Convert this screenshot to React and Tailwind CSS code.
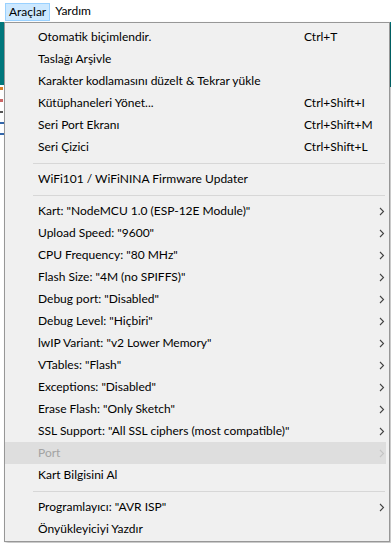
import { Fragment } from 'react';

const Chevron = ({ muted }) => (
  <svg width="6" height="9" viewBox="0 0 6 9" className="block">
    <path d="M1 1 L4.5 4.5 L1 8" fill="none" stroke={muted ? '#c4c4c4' : '#444'} strokeWidth="1.1" />
  </svg>
);

const sections = [
  [
    { label: 'Otomatik biçimlendir.', shortcut: 'Ctrl+T' },
    { label: 'Taslağı Arşivle' },
    { label: 'Karakter kodlamasını düzelt & Tekrar yükle' },
    { label: 'Kütüphaneleri Yönet...', shortcut: 'Ctrl+Shift+I' },
    { label: 'Seri Port Ekranı', shortcut: 'Ctrl+Shift+M' },
    { label: 'Seri Çizici', shortcut: 'Ctrl+Shift+L' },
  ],
  [{ label: 'WiFi101 / WiFiNINA Firmware Updater' }],
  [
    { label: 'Kart: "NodeMCU 1.0 (ESP-12E Module)"', sub: true },
    { label: 'Upload Speed: "9600"', sub: true },
    { label: 'CPU Frequency: "80 MHz"', sub: true },
    { label: 'Flash Size: "4M (no SPIFFS)"', sub: true },
    { label: 'Debug port: "Disabled"', sub: true },
    { label: 'Debug Level: "Hiçbiri"', sub: true },
    { label: 'lwIP Variant: "v2 Lower Memory"', sub: true },
    { label: 'VTables: "Flash"', sub: true },
    { label: 'Exceptions: "Disabled"', sub: true },
    { label: 'Erase Flash: "Only Sketch"', sub: true },
    { label: 'SSL Support: "All SSL ciphers (most compatible)"', sub: true },
    { label: 'Port', sub: true, disabled: true },
    { label: 'Kart Bilgisini Al' },
  ],
  [
    { label: 'Programlayıcı: "AVR ISP"', sub: true },
    { label: 'Önyükleyiciyi Yazdır' },
  ],
];

function MenuItem({ item }) {
  return (
    <div
      className={`flex items-center h-[22px] mr-[3px] ${item.disabled ? 'bg-[#dedede] text-[#a3a3a3]' : 'text-black'}`}
    >
      <span className="pl-[33px] flex-1 whitespace-nowrap">{item.label}</span>
      {item.shortcut && <span className="w-[75px] whitespace-nowrap">{item.shortcut}</span>}
      <span className="w-[7px] flex justify-start">{item.sub && <Chevron muted={item.disabled} />}</span>
    </div>
  );
}

export default function App() {
  return (
    <div className="relative w-[391px] h-[543px] overflow-hidden bg-white text-[12px] font-['Lato',sans-serif]">
      {/* menu bar */}
      <div className="flex items-center h-[22px] bg-white pl-[5px] gap-[1px]">
        <div className="h-[18px] mt-[2px] px-[3px] flex items-center bg-[#cce8ff] border border-[#99d1ff]">Araçlar</div>
        <div className="px-[4px]">Yardım</div>
      </div>

      {/* app behind the menu */}
      <div className="flex h-[521px]">
        <div className="w-[4px] flex flex-col">
          <div className="h-[63px] bg-[#00777c]" />
          <div className="flex-1 bg-white flex flex-col gap-[9px] pt-[2px]">
            <div className="h-[3px] w-[3px] bg-[#d9822b]" />
            <div className="h-[3px] w-[3px] bg-[#cc6666]" />
            <div className="h-[2px] w-[3px] bg-[#555]" />
            <div className="h-[2px] w-[4px] bg-[#3366aa]" />
            <div className="h-[2px] w-[4px] bg-[#3366aa]" />
          </div>
        </div>
        <div className="flex-1" />
        <div className="w-[2px] flex flex-col">
          <div className="h-[65px] bg-[#00777c]" />
        </div>
      </div>

      {/* dropdown */}
      <div className="absolute left-[4px] top-[22px] w-[386px] h-[520px] bg-[#f0f0f0] border border-[#979797] shadow-[2px_2px_3px_rgba(0,0,0,0.25)] pt-[3px]">
        {sections.map((sec, i) => (
          <Fragment key={i}>
            {i > 0 && <div className="h-[10px] flex items-center pl-[28px] pr-[4px]"><div className="h-px w-full bg-[#d7d7d7]" /></div>}
            {sec.map((item) => (
              <MenuItem key={item.label} item={item} />
            ))}
          </Fragment>
        ))}
      </div>
    </div>
  );
}
